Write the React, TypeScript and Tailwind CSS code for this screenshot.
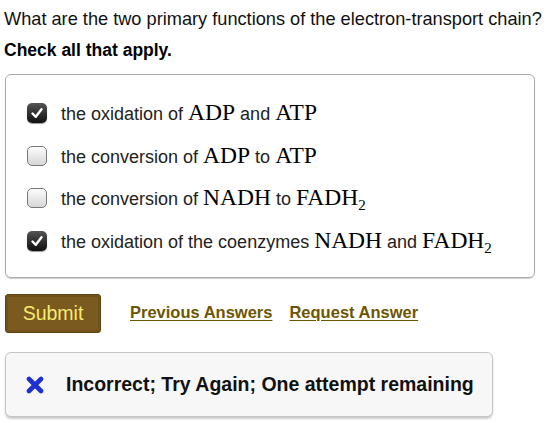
import type React from "react"

type Part = { t: string; math?: boolean; sub?: string }

const options: { checked: boolean; parts: Part[] }[] = [
  {
    checked: true,
    parts: [{ t: "the oxidation of " }, { t: "ADP", math: true }, { t: " and " }, { t: "ATP", math: true }],
  },
  {
    checked: false,
    parts: [{ t: "the conversion of " }, { t: "ADP", math: true }, { t: " to " }, { t: "ATP", math: true }],
  },
  {
    checked: false,
    parts: [{ t: "the conversion of " }, { t: "NADH", math: true }, { t: " to " }, { t: "FADH", math: true, sub: "2" }],
  },
  {
    checked: true,
    parts: [
      { t: "the oxidation of the coenzymes " },
      { t: "NADH", math: true },
      { t: " and " },
      { t: "FADH", math: true, sub: "2" },
    ],
  },
]

const CheckBox: React.FC<{ checked: boolean }> = ({ checked }) =>
  checked ? (
    <span className="flex h-[20px] w-[20px] shrink-0 items-center justify-center rounded-[5px] bg-gradient-to-b from-[#555] to-[#111] shadow-[0_1px_1px_rgba(0,0,0,0.4)]">
      <svg width="14" height="14" viewBox="0 0 14 14">
        <path d="M2.5 7.5 L5.8 10.8 L11.5 3.2" fill="none" stroke="#fff" strokeWidth="2.4" strokeLinecap="round" strokeLinejoin="round" />
      </svg>
    </span>
  ) : (
    <span className="block h-[20px] w-[20px] shrink-0 rounded-[5px] border border-[#777] bg-gradient-to-b from-[#fdfdfd] to-[#d6d6d6]" />
  )

export default function App() {
  return (
    <div className="h-[423px] w-[546px] overflow-hidden bg-white pl-[5px] pt-[9px] text-black" style={{ fontFamily: '"Liberation Sans", Arial, sans-serif' }}>
      <p className="-ml-[1px] whitespace-nowrap text-[18.2px] leading-[20px] text-[#111]">What are the two primary functions of the electron-transport chain?</p>
      <p className="-ml-[1px] mt-[11px] text-[17.5px] font-bold leading-[20px]">Check all that apply.</p>

      <div className="mt-[14px] flex h-[204px] w-[530px] flex-col gap-[20.7px] rounded-[6px] border border-[#aaa] pl-[21px] pt-[27px] shadow-[0_1px_1px_rgba(0,0,0,0.2)]">
        {options.map((o, i) => (
          <div key={i} className="flex h-[22px] items-center gap-[14px]">
            <CheckBox checked={o.checked} />
            <span className="whitespace-nowrap text-[18px] leading-[22px] text-[#222]">
              {o.parts.map((p, j) =>
                p.math ? (
                  <span key={j} className="text-[23.5px] text-black" style={{ fontFamily: '"Liberation Serif", "Times New Roman", serif' }}>
                    {p.t}
                    {p.sub && <span className="relative top-[5px] text-[15px]">{p.sub}</span>}
                  </span>
                ) : (
                  <span key={j}>{p.t}</span>
                )
              )}
            </span>
          </div>
        ))}
      </div>

      <div className="mt-[16px] flex items-center">
        <button className="h-[39px] w-[96px] rounded-[3px] border border-[#5f4411] bg-[#7b5a1f] text-[19.5px] text-[#f7ea70] shadow-[inset_0_0_0_2px_rgba(0,0,0,0.08)]">
          Submit
        </button>
        <a className="ml-[29px] -mt-[3px] text-[16.5px] font-bold text-[#6e5500] underline underline-offset-[2px]">Previous Answers</a>
        <a className="ml-[17px] -mt-[3px] text-[16.5px] font-bold text-[#6e5500] underline underline-offset-[2px]">Request Answer</a>
      </div>

      <div className="mt-[19px] flex h-[65px] w-[488px] items-center rounded-[6px] border border-[#c5c5c5] bg-[#f7f7f7] pl-[20px] shadow-[0_2px_2px_rgba(0,0,0,0.2)]">
        <svg width="18" height="18" viewBox="0 0 18 18">
          <path d="M3 3 L15 15 M15 3 L3 15" stroke="#1f2fd0" strokeWidth="4.6" strokeLinecap="round" />
        </svg>
        <span className="ml-[22px] whitespace-nowrap text-[19.5px] font-bold text-[#111]">Incorrect; Try Again; One attempt remaining</span>
      </div>
    </div>
  )
}
